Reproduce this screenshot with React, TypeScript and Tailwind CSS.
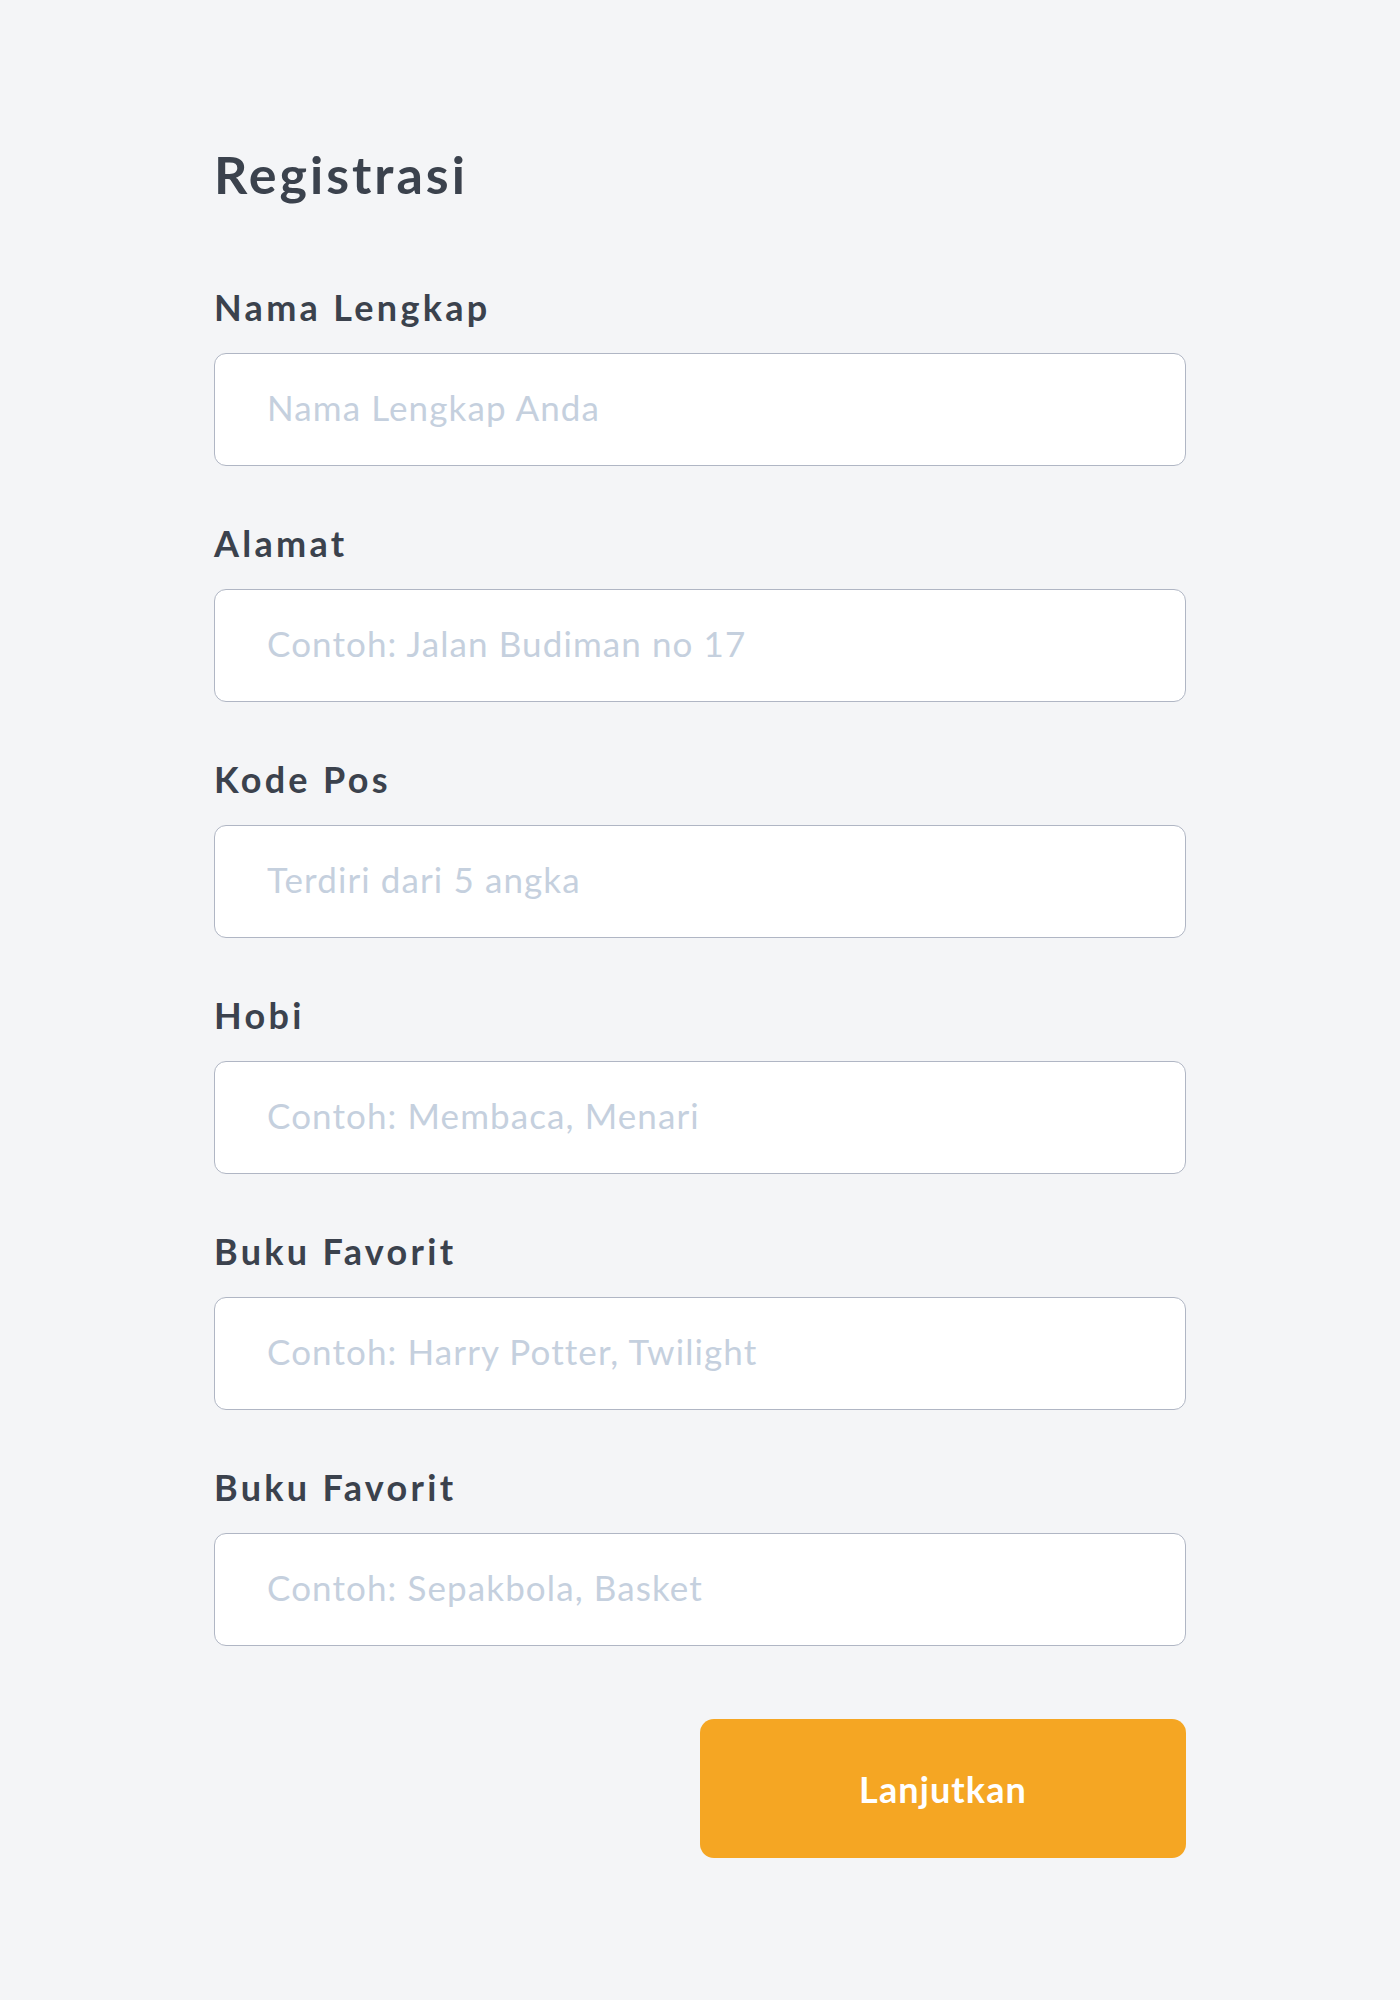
import React from "react";

const fields = [
  { label: "Nama Lengkap", placeholder: "Nama Lengkap Anda" },
  { label: "Alamat", placeholder: "Contoh: Jalan Budiman no 17" },
  { label: "Kode Pos", placeholder: "Terdiri dari 5 angka" },
  { label: "Hobi", placeholder: "Contoh: Membaca, Menari" },
  { label: "Buku Favorit", placeholder: "Contoh: Harry Potter, Twilight" },
  { label: "Buku Favorit", placeholder: "Contoh: Sepakbola, Basket" },
];

export default function App() {
  return (
    <div
      className="min-h-[2000px] w-full bg-[#f4f5f7]"
      style={{ fontFamily: "Lato, 'Noto Sans', sans-serif" }}
    >
      <div className="ml-[214px] w-[972px] pt-[148px]">
        <h1 className="text-[52px] leading-none font-bold text-[#3b424d] tracking-[3px]">
          Registrasi
        </h1>
        <form className="mt-[89px] flex flex-col gap-[59px]">
          {fields.map((f, i) => (
            <div key={i} className="flex flex-col gap-[28px]">
              <label className="text-[36px] leading-none font-bold text-[#3b424d] tracking-[3.3px]">
                {f.label}
              </label>
              <input
                type="text"
                placeholder={f.placeholder}
                className="h-[113px] w-full rounded-[12px] border border-[#b0b6c4] bg-white pl-[52px] pr-[52px] pb-[5px] text-[35px] text-[#3b424d] placeholder:text-[#c5d0de] outline-none tracking-[1.1px]"
              />
            </div>
          ))}
        </form>
        <div className="mt-[73px] flex justify-end">
          <button
            type="button"
            className="flex h-[139px] w-[486px] items-center justify-center rounded-[14px] bg-[#f5a623] text-[36px] font-bold text-white tracking-[1.1px]"
          >
            Lanjutkan
          </button>
        </div>
      </div>
    </div>
  );
}
